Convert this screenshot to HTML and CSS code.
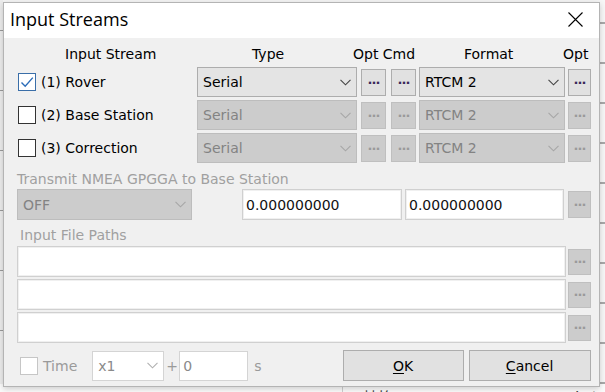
FILE: index.html
```html
<!DOCTYPE html>
<html>
<head>
<meta charset="utf-8">
<link rel="stylesheet" href="styles.css">
</head>
<body>
<div class="desktop">
  <div class="backapp">
    <div class="back-left"></div>
    <div class="back-right"></div>
    <div class="back-bottom">
      <span class="back-line"></span>
      <span class="back-t1">替换</span>
      <span class="back-t2">Ctrl+/</span>
    </div>
  </div>

  <div class="dialog">
    <div class="titlebar">
      <span class="title">Input Streams</span>
      <svg class="close" width="15" height="15" viewBox="0 0 15 15"><path d="M0.5 0.5 L14.5 14.5 M14.5 0.5 L0.5 14.5" stroke="#000" stroke-width="1.1" fill="none"/></svg>
    </div>

    <div class="content">
      <div class="hdr">
        <span class="h h1">Input Stream</span>
        <span class="h h2">Type</span>
        <span class="h h3">Opt Cmd</span>
        <span class="h h4">Format</span>
        <span class="h h5">Opt</span>
      </div>

      <div class="srow">
        <div class="sl">
          <span class="cb cb-on"><svg width="16" height="16" viewBox="0 0 16 16"><path d="M2.5 8.5 L6.2 12.2 L13.8 3.6" stroke="#2b6cb8" stroke-width="1.4" fill="none"/></svg></span>
          <span class="sltext">(1) Rover</span>
        </div>
        <div class="combo c-type"><span>Serial</span><svg class="chev" width="11" height="7" viewBox="0 0 11 7"><path d="M0.5 0.8 L5.5 5.8 L10.5 0.8" stroke="#444" stroke-width="1.1" fill="none"/></svg></div>
        <div class="btn b-opt">&middot;&middot;&middot;</div>
        <div class="btn b-cmd">&middot;&middot;&middot;</div>
        <div class="combo c-fmt"><span>RTCM 2</span><svg class="chev" width="11" height="7" viewBox="0 0 11 7"><path d="M0.5 0.8 L5.5 5.8 L10.5 0.8" stroke="#444" stroke-width="1.1" fill="none"/></svg></div>
        <div class="btn b-opt2">&middot;&middot;&middot;</div>
      </div>

      <div class="srow">
        <div class="sl">
          <span class="cb"></span>
          <span class="sltext">(2) Base Station</span>
        </div>
        <div class="combo c-type dis"><span>Serial</span><svg class="chev" width="11" height="7" viewBox="0 0 11 7"><path d="M0.5 0.8 L5.5 5.8 L10.5 0.8" stroke="#a6a6a6" stroke-width="1.1" fill="none"/></svg></div>
        <div class="btn b-opt dis">&middot;&middot;&middot;</div>
        <div class="btn b-cmd dis">&middot;&middot;&middot;</div>
        <div class="combo c-fmt dis"><span>RTCM 2</span><svg class="chev" width="11" height="7" viewBox="0 0 11 7"><path d="M0.5 0.8 L5.5 5.8 L10.5 0.8" stroke="#a6a6a6" stroke-width="1.1" fill="none"/></svg></div>
        <div class="btn b-opt2 dis">&middot;&middot;&middot;</div>
      </div>

      <div class="srow">
        <div class="sl">
          <span class="cb"></span>
          <span class="sltext">(3) Correction</span>
        </div>
        <div class="combo c-type dis"><span>Serial</span><svg class="chev" width="11" height="7" viewBox="0 0 11 7"><path d="M0.5 0.8 L5.5 5.8 L10.5 0.8" stroke="#a6a6a6" stroke-width="1.1" fill="none"/></svg></div>
        <div class="btn b-opt dis">&middot;&middot;&middot;</div>
        <div class="btn b-cmd dis">&middot;&middot;&middot;</div>
        <div class="combo c-fmt dis"><span>RTCM 2</span><svg class="chev" width="11" height="7" viewBox="0 0 11 7"><path d="M0.5 0.8 L5.5 5.8 L10.5 0.8" stroke="#a6a6a6" stroke-width="1.1" fill="none"/></svg></div>
        <div class="btn b-opt2 dis">&middot;&middot;&middot;</div>
      </div>

      <div class="glabel g1">Transmit NMEA GPGGA to Base Station</div>
      <div class="trow">
        <div class="combo c-off dis"><span>OFF</span><svg class="chev" width="11" height="7" viewBox="0 0 11 7"><path d="M0.5 0.8 L5.5 5.8 L10.5 0.8" stroke="#a6a6a6" stroke-width="1.1" fill="none"/></svg></div>
        <div class="field f-lat">0.000000000</div>
        <div class="field f-lon">0.000000000</div>
        <div class="btn b-pos dis">&middot;&middot;&middot;</div>
      </div>

      <div class="glabel g2">Input File Paths</div>
      <div class="prow">
        <div class="field f-path"></div>
        <div class="btn b-path dis">&middot;&middot;&middot;</div>
      </div>
      <div class="prow">
        <div class="field f-path"></div>
        <div class="btn b-path dis">&middot;&middot;&middot;</div>
      </div>
      <div class="prow">
        <div class="field f-path"></div>
        <div class="btn b-path dis">&middot;&middot;&middot;</div>
      </div>

      <div class="brow">
        <span class="cb cb-dis"></span>
        <span class="gtext t-time">Time</span>
        <div class="combo c-x1"><span>x1</span><svg class="chev" width="11" height="7" viewBox="0 0 11 7"><path d="M0.5 0.8 L5.5 5.8 L10.5 0.8" stroke="#b0b0b0" stroke-width="1.1" fill="none"/></svg></div>
        <span class="gtext t-plus">+</span>
        <div class="field f-off">0</div>
        <span class="gtext t-s">s</span>
        <div class="pbtn b-ok"><span class="u">O</span>K</div>
        <div class="pbtn b-cancel"><span class="u">C</span>ancel</div>
      </div>
    </div>
  </div>
</div>
</body>
</html>
```

FILE: styles.css
```css
html, body {
  margin: 0;
  padding: 0;
}
body {
  width: 605px;
  height: 392px;
  overflow: hidden;
  background: #f4f4f4;
  font-family: "DejaVu Sans", Verdana, sans-serif;
  font-size: 14px;
  color: #000;
}
.desktop {
  position: relative;
  width: 605px;
  height: 392px;
  overflow: hidden;
}
.backapp {
  position: absolute;
  left: 0;
  top: 0;
  width: 605px;
  height: 392px;
}
.back-left {
  position: absolute;
  left: 0;
  top: 0;
  width: 3px;
  height: 392px;
  background: repeating-linear-gradient(#ececec 0 30px, #9a9a9a 30px 31px, #ececec 31px 60px);
}
.back-right {
  position: absolute;
  right: 0;
  top: 0;
  width: 5px;
  height: 392px;
  background: repeating-linear-gradient(#f7f7f7 0 22px, #a8a8a8 22px 24px, #f7f7f7 24px 40px);
}
.back-bottom {
  position: absolute;
  left: 0;
  top: 384px;
  width: 605px;
  height: 20px;
  background: #fbfbfb;
  color: #444;
  font-family: "Noto Sans CJK SC", "DejaVu Sans", sans-serif;
  font-size: 16px;
}
.back-line {
  position: absolute;
  left: 342px;
  top: 0;
  width: 1px;
  height: 20px;
  background: #cfcfcf;
}
.back-t1 {
  position: absolute;
  left: 362px;
  top: 1px;
}
.back-t2 {
  position: absolute;
  left: 553px;
  top: 1px;
}

.dialog {
  position: relative;
  margin: 2px 0 0 3px;
  width: 595px;
  height: 383px;
  border: 1px solid #b4b4b4;
  background: #f0f0f0;
  box-shadow: 0 2px 6px rgba(0,0,0,0.18);
}
.titlebar {
  height: 35px;
  background: #fff;
  display: flex;
  align-items: flex-start;
}
.title {
  font-family: "Open Sans", "Noto Sans", sans-serif;
  font-size: 18px;
  line-height: 32px;
  margin-left: 6px;
  color: #000;
}
.close {
  margin-left: auto;
  margin-right: 16px;
  margin-top: 9px;
}

.content {
  padding: 7px 0 0 13px;
}
.hdr {
  display: flex;
  height: 18px;
  line-height: 18px;
  margin-bottom: 4px;
  white-space: nowrap;
}
.h1 { padding-left: 48px; width: 187px; }
.h2 { width: 101px; }
.h3 { width: 111px; }
.h4 { width: 99px; }

.srow {
  display: flex;
  align-items: center;
  height: 30px;
  margin-bottom: 3px;
}
.sl {
  width: 180px;
  display: flex;
  align-items: center;
  white-space: nowrap;
}
.cb {
  box-sizing: border-box;
  width: 18px;
  height: 18px;
  margin-left: 1px;
  border: 1px solid #333;
  background: #fff;
  display: flex;
  align-items: center;
  justify-content: center;
  flex: none;
}
.cb-on {
  border-color: #3a6ea8;
}
.cb-dis {
  border-color: #c6c6c6;
  margin-left: 3px;
}
.sltext {
  margin-left: 5px;
}

.combo {
  box-sizing: border-box;
  height: 30px;
  border: 1px solid #adadad;
  background: #e4e4e4;
  display: flex;
  align-items: center;
  padding-left: 5px;
  padding-right: 5px;
  flex: none;
}
.combo .chev {
  margin-left: auto;
}
.combo.dis {
  background: #cccccc;
  border-color: #bdbdbd;
  color: #838383;
}
.c-type { width: 160px; }
.c-fmt { width: 146px; margin-left: 3px; }

.btn {
  box-sizing: border-box;
  height: 27px;
  border: 1px solid #adadad;
  background: #e1e1e1;
  display: flex;
  align-items: center;
  justify-content: center;
  font-size: 13px;
  font-weight: bold;
  letter-spacing: -1px;
  color: #3a2a5a;
  flex: none;
}
.btn.dis {
  background: #cccccc;
  border-color: #bfbfbf;
  color: #9a9a9a;
}
.b-opt { width: 25px; margin-left: 4px; }
.b-cmd { width: 25px; margin-left: 5px; }
.b-opt2 { width: 23px; margin-left: 3px; }

.glabel {
  height: 17px;
  line-height: 17px;
  color: #a0a0a0;
  white-space: nowrap;
}
.g1 { margin-top: 8px; }
.g2 { margin-top: 7px; padding-left: 3px; }

.trow {
  display: flex;
  align-items: center;
  height: 31px;
  margin-top: 1px;
}
.c-off { width: 175px; height: 31px; }
.field {
  box-sizing: border-box;
  height: 31px;
  background: #fff;
  border: 1px solid #d0d0d0;
  box-shadow: inset 0 0 0 1px #f0f0f0;
  display: flex;
  align-items: center;
  padding-left: 3px;
  color: #111;
  flex: none;
}
.f-lat { width: 160px; margin-left: 50px; }
.f-lon { width: 159px; margin-left: 3px; }
.b-pos { width: 23px; margin-left: 4px; }

.prow {
  display: flex;
  align-items: center;
  height: 31px;
  margin-top: 2px;
}
.f-path { width: 549px; }
.b-path { width: 23px; height: 26px; margin-left: 2px; }

.brow {
  display: flex;
  align-items: center;
  height: 33px;
  margin-top: 6px;
}
.gtext {
  color: #9a9a9a;
  white-space: nowrap;
}
.t-time { margin-left: 5px; }
.c-x1 {
  width: 72px;
  margin-left: 15px;
  background: #fff;
  border-color: #d4d4d4;
  color: #8a8a8a;
}
.t-plus { margin-left: 2px; width: 13px; }
.f-off {
  width: 69px;
  height: 30px;
  color: #8a8a8a;
  border-color: #d4d4d4;
  box-shadow: none;
}
.t-s { margin-left: 6px; }
.pbtn {
  box-sizing: border-box;
  height: 31px;
  border: 1px solid #adadad;
  background: #e1e1e1;
  display: flex;
  align-items: center;
  justify-content: center;
  flex: none;
}
.b-ok { width: 121px; margin-left: 81px; }
.b-cancel { width: 122px; margin-left: 5px; }
.u { text-decoration: underline; text-underline-offset: 2px; }
```
